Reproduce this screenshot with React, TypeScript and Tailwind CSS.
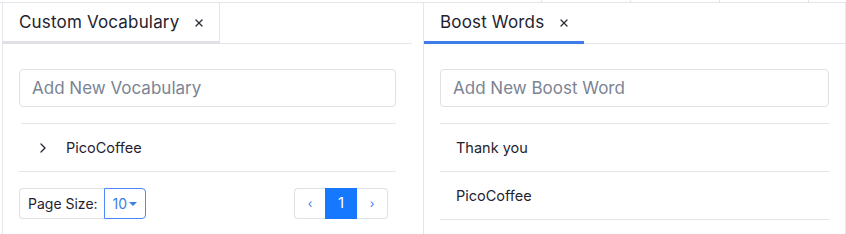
import { ChevronRight, X } from "lucide-react";

const font = { fontFamily: "Inter, 'Noto Sans', sans-serif" };

function Tab({ label, active }: { label: string; active?: boolean }) {
  return (
    <div
      className={`-mb-px flex h-[41px] items-center gap-[14px] pl-4 pr-[14px] pt-[2px] border-b-[3px] ${
        active ? "border-b-[#3b7de9]" : "border-b-[#dfe1e6] border-r border-r-[#e4e6eb]"
      }`}
    >
      <span className="text-[17px] text-[#1f2330] tracking-[0.01em]">{label}</span>
      <X size={12} strokeWidth={2.6} className="text-[#2a2e38]" />
    </div>
  );
}

function Field({ placeholder }: { placeholder: string }) {
  return (
    <input
      placeholder={placeholder}
      className="mt-[25px] h-[38px] w-full rounded border border-[#dfe1e6] px-3 text-[17px] text-[#333] placeholder:text-[#7b8494] outline-none"
    />
  );
}

export default function App() {
  return (
    <div style={font} className="w-[846px] h-[234px] bg-white overflow-hidden">
      {/* cut-off row above */}
      <div className="flex h-[3px] border-b border-[#e4e6eb]">
        <div className="w-[541px]" />
        <div className="w-[89px] border-l border-[#e4e6eb]" />
        <div className="w-[89px] border-l border-[#e4e6eb]" />
        <div className="w-[89px] border-l border-[#e4e6eb]" />
        <div className="flex-1 border-l border-[#e4e6eb]" />
      </div>

      <div className="flex h-[231px]">
        {/* Custom Vocabulary */}
        <div className="ml-[2px] w-[410px] border-l border-[#e4e6eb]">
          <div className="flex border-b border-[#e4e6eb]">
            <Tab label="Custom Vocabulary" />
          </div>
          <div className="px-4">
            <Field placeholder="Add New Vocabulary" />
            <div className="mt-[16px] border-t border-[#e4e6eb] ml-[2px]" />
            <div className="flex h-[48px] items-center border-b border-[#e4e6eb]">
              <ChevronRight size={16} strokeWidth={2} className="ml-[16px] text-[#2a2e38]" />
              <span className="ml-[15px] text-[14.5px] text-[#1f2330]">PicoCoffee</span>
            </div>
            <div className="mt-[16px] flex items-center justify-between pr-2">
              <div className="flex h-[31px] text-[14px]">
                <div className="flex items-center rounded-l border border-r-0 border-[#dfe1e6] pl-[8px] pr-[6px] text-[#1f2330]">
                  Page Size:
                </div>
                <div className="flex items-center gap-[2px] rounded-r border border-[#4a8af4] pl-[8px] pr-[8px] text-[#3b7de9]">
                  10
                  <span className="h-0 w-0 border-x-[4px] border-t-[4px] border-x-transparent border-t-[#3b7de9]" />
                </div>
              </div>
              <div className="flex h-[31px] text-[#3b7de9]">
                <div className="flex w-[31px] items-center justify-center rounded-l border border-r-0 border-[#dfe1e6] text-[12px]">
                  ‹
                </div>
                <div className="flex w-[32px] items-center justify-center bg-[#1677ff] text-[15px] text-white">
                  1
                </div>
                <div className="flex w-[31px] items-center justify-center rounded-r border border-l-0 border-[#dfe1e6] text-[12px]">
                  ›
                </div>
              </div>
            </div>
          </div>
        </div>

        {/* Boost Words */}
        <div className="ml-[11px] flex-1 border-l border-r border-[#e4e6eb]">
          <div className="flex border-b border-[#e4e6eb]">
            <Tab label="Boost Words" active />
          </div>
          <div className="px-4">
            <Field placeholder="Add New Boost Word" />
            <div className="mt-[16px]">
              {["Thank you", "PicoCoffee"].map((w) => (
                <div
                  key={w}
                  className="flex h-[48px] items-center border-t border-[#e4e6eb] pl-[16px] text-[14.5px] text-[#1f2330]"
                >
                  {w}
                </div>
              ))}
              <div className="border-t border-[#e4e6eb]" />
            </div>
          </div>
        </div>
      </div>
    </div>
  );
}
